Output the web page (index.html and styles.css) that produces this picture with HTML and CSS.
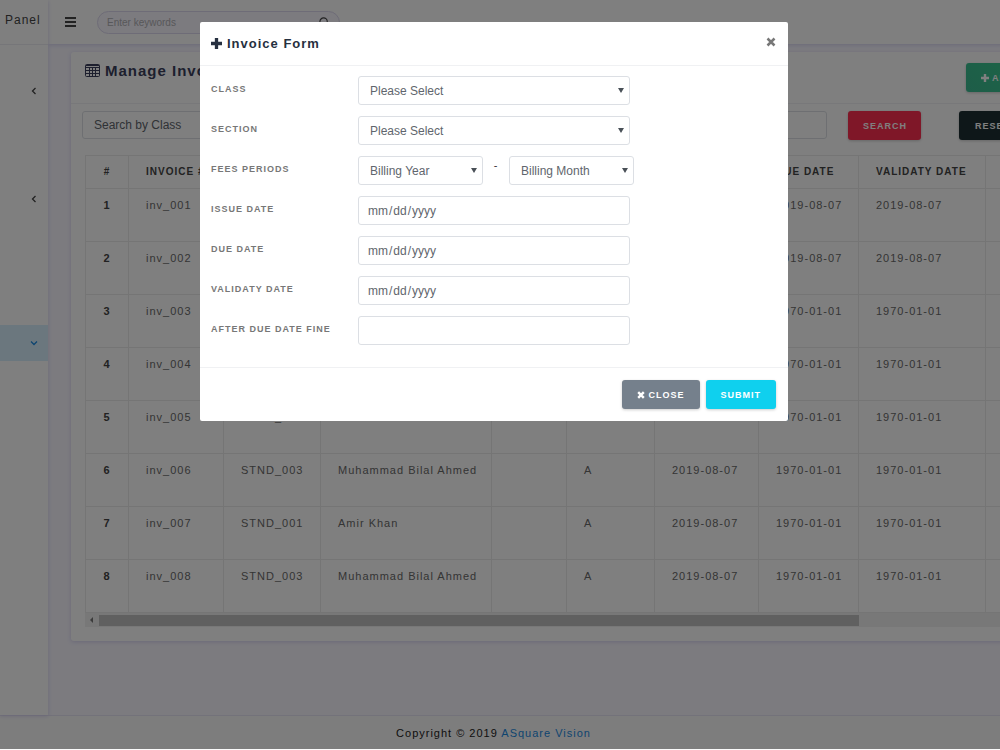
FILE: index.html
```html
<!DOCTYPE html>
<html lang="en">
<head>
    <meta charset="UTF-8">
    <meta name="viewport" content="width=device-width, initial-scale=1.0">
    <title>Manage Invoices</title>
    <link rel="stylesheet" href="styles.css">
</head>
<body>
    <div class="page">
        <!-- Sidebar -->
        <aside class="sidebar">
            <div class="logo">Panel</div>
            <ul class="menu">
                <li><a href="#" aria-label="Menu"><svg class="chevron" viewBox="0 0 8 8"><path d="M5.5 1 2.5 4l3 3"/></svg></a></li>
                <li></li>
                <li></li>
                <li><a href="#" aria-label="Menu"><svg class="chevron" viewBox="0 0 8 8"><path d="M5.5 1 2.5 4l3 3"/></svg></a></li>
                <li></li>
                <li></li>
                <li></li>
                <li class="active"><a href="#" aria-label="Menu"><svg class="chevron" viewBox="0 0 8 8"><path d="M1 2.5l3 3 3-3"/></svg></a></li>
            </ul>
        </aside>

        <div class="main">
            <!-- Top bar -->
            <header class="topbar">
                <button class="toggle" aria-label="Toggle menu"><span></span><span></span><span></span></button>
                <div class="search">
                    <input type="text" placeholder="Enter keywords" aria-label="Search">
                    <svg viewBox="0 0 12 12"><circle cx="5" cy="5" r="4"/><path d="M8 8l3 3"/></svg>
                </div>
            </header>

            <!-- Invoices -->
            <section class="card">
                <div class="card-header">
                    <h1>
                        <svg class="table-icon" viewBox="0 0 15 13"><rect x=".5" y=".5" width="14" height="12" rx="1"/><path d="M1 1.500h13M1 3.500h13M1 6.500h13M1 9.500h13M4.500 3v9M7.500 3v9M10.500 3v9"/></svg>
                        Manage Invoices
                    </h1>
                    <button class="btn btn-green"><svg class="icon" viewBox="0 0 10 10"><path d="M3.500 0h3v3.500H10v3H6.500V10h-3V6.500H0v-3h3.500z"/></svg> Add New</button>
                </div>
                <div class="filters">
                    <select class="field" aria-label="Search by Class"><option>Search by Class</option></select>
                    <input class="field" type="text" aria-label="Search">
                    <button class="btn btn-red">Search</button>
                    <button class="btn btn-dark">Reset</button>
                </div>
                <div class="table-wrap">
                    <table>
                        <colgroup>
                            <col class="w-num"><col class="w-inv"><col class="w-std"><col class="w-name"><col class="w-class">
                            <col class="w-sec"><col class="w-issue"><col class="w-due"><col class="w-valid"><col class="w-rest">
                        </colgroup>
                        <thead>
                            <tr><th>#</th><th>Invoice #</th><th>Roll #</th><th>Name</th><th>Class</th><th>Section</th><th>Issue Date</th><th>Due Date</th><th>Validaty Date</th><th></th></tr>
                        </thead>
                        <tbody>
                            <tr><th>1</th><td>inv_001</td><td>STND_001</td><td>Amir Khan</td><td></td><td>A</td><td>2019-08-07</td><td>2019-08-07</td><td>2019-08-07</td><td></td></tr>
                            <tr><th>2</th><td>inv_002</td><td>STND_003</td><td>Muhammad Bilal Ahmed</td><td></td><td>A</td><td>2019-08-07</td><td>2019-08-07</td><td>2019-08-07</td><td></td></tr>
                            <tr><th>3</th><td>inv_003</td><td>STND_001</td><td>Amir Khan</td><td></td><td>A</td><td>2019-08-07</td><td>1970-01-01</td><td>1970-01-01</td><td></td></tr>
                            <tr><th>4</th><td>inv_004</td><td>STND_003</td><td>Muhammad Bilal Ahmed</td><td></td><td>A</td><td>2019-08-07</td><td>1970-01-01</td><td>1970-01-01</td><td></td></tr>
                            <tr><th>5</th><td>inv_005</td><td>STND_001</td><td>Amir Khan</td><td></td><td>A</td><td>2019-08-07</td><td>1970-01-01</td><td>1970-01-01</td><td></td></tr>
                            <tr><th>6</th><td>inv_006</td><td>STND_003</td><td>Muhammad Bilal Ahmed</td><td></td><td>A</td><td>2019-08-07</td><td>1970-01-01</td><td>1970-01-01</td><td></td></tr>
                            <tr><th>7</th><td>inv_007</td><td>STND_001</td><td>Amir Khan</td><td></td><td>A</td><td>2019-08-07</td><td>1970-01-01</td><td>1970-01-01</td><td></td></tr>
                            <tr><th>8</th><td>inv_008</td><td>STND_003</td><td>Muhammad Bilal Ahmed</td><td></td><td>A</td><td>2019-08-07</td><td>1970-01-01</td><td>1970-01-01</td><td></td></tr>
                        </tbody>
                    </table>
                </div>
                <div class="scrollbar"><span class="scroll-arrow"></span><span class="scroll-thumb"></span></div>
            </section>
        </div>
    </div>

    <footer class="footer">Copyright © 2019 <a href="#">ASquare Vision</a></footer>

    <!-- Invoice modal -->
    <div class="backdrop">
        <form class="modal" role="dialog" aria-labelledby="modal-title">
            <div class="modal-header">
                <h2 id="modal-title"><svg class="icon" viewBox="0 0 10 10"><path d="M3.500 0h3v3.500H10v3H6.500V10h-3V6.500H0v-3h3.500z"/></svg> Invoice Form</h2>
                <button type="button" class="close" aria-label="Close"><svg viewBox="0 0 10 10"><path d="M1.500 1.500l7 7M8.500 1.500l-7 7"/></svg></button>
            </div>
            <div class="modal-body">
                <div class="form-row">
                    <label for="class">Class</label>
                    <div class="select"><select class="field" id="class"><option>Please Select</option></select></div>
                </div>
                <div class="form-row">
                    <label for="section">Section</label>
                    <div class="select"><select class="field" id="section"><option>Please Select</option></select></div>
                </div>
                <div class="form-row">
                    <label for="year">Fees Periods</label>
                    <div class="period">
                        <div class="select"><select class="field" id="year"><option>Billing Year</option></select></div>
                        <span>-</span>
                        <div class="select"><select class="field" aria-label="Billing Month"><option>Billing Month</option></select></div>
                    </div>
                </div>
                <div class="form-row">
                    <label for="issue">Issue Date</label>
                    <input class="field" type="date" id="issue">
                </div>
                <div class="form-row">
                    <label for="due">Due Date</label>
                    <input class="field" type="date" id="due">
                </div>
                <div class="form-row">
                    <label for="validity">Validaty Date</label>
                    <input class="field" type="date" id="validity">
                </div>
                <div class="form-row">
                    <label for="fine">After Due Date Fine</label>
                    <input class="field" type="text" id="fine">
                </div>
            </div>
            <div class="modal-footer">
                <button type="button" class="btn btn-gray"><svg class="icon icon-x" viewBox="0 0 10 10"><path d="M1.500 1.500l7 7M8.500 1.500l-7 7"/></svg> Close</button>
                <button type="submit" class="btn btn-cyan">Submit</button>
            </div>
        </form>
    </div>
</body>
</html>
```

FILE: styles.css
```css
* {
    box-sizing: border-box;
}
body {
    margin: 0;
    min-height: 100vh;
    display: flex;
    flex-direction: column;
    overflow: hidden;
    font-family: "Liberation Sans", Arial, sans-serif;
    font-size: 11px;
    letter-spacing: 1px;
    color: #6a6a6a;
    background: #f8f6ff;
}
button, input, select {
    font-family: inherit;
}
a {
    color: #1b8ae0;
    text-decoration: none;
}
.page {
    display: flex;
    flex: 1;
    min-width: 1068px;
}

/* Sidebar */
.sidebar {
    width: 48px;
    background: #fff;
    box-shadow: 0 1px 4px #d5d2f0;
    position: relative;
}
.logo {
    height: 45px;
    line-height: 40px;
    padding-left: 5px;
    border-bottom: 1px solid #ececf2;
    font-size: 12px;
    color: #444;
}
.menu {
    list-style: none;
    margin: 28px 0 0;
    padding: 0;
}
.menu li {
    height: 36px;
}
.menu a {
    display: flex;
    height: 100%;
    align-items: center;
    justify-content: flex-end;
    padding-right: 10px;
    color: #444;
}
.menu .active {
    background: #d7effd;
}
.menu .active a {
    color: #1b8ae0;
}
.chevron {
    width: 8px;
    height: 8px;
    fill: none;
    stroke: currentColor;
    stroke-width: 1.3;
}

/* Top bar */
.main {
    flex: 1;
    min-width: 0;
}
.topbar {
    height: 44px;
    display: flex;
    align-items: center;
    padding-left: 17px;
    background: #fff;
    box-shadow: 0 1px 4px #d5d2f0;
}
.toggle {
    width: 11px;
    padding: 0;
    border: none;
    background: none;
}
.toggle span {
    display: block;
    height: 2px;
    margin: 1px 0 2px;
    background: #444;
}
.search {
    width: 243px;
    height: 23px;
    margin-left: 21px;
    padding: 0 9px;
    display: flex;
    align-items: center;
    border: 1px solid #dcd8ee;
    border-radius: 12px;
    background: #f8f6ff;
}
.search input {
    flex: 1;
    min-width: 0;
    padding: 0;
    border: none;
    outline: none;
    background: none;
    font-size: 10px;
}
.search input::placeholder {
    color: #b0b0b4;
}
.search svg {
    width: 11px;
    height: 11px;
    fill: none;
    stroke: #444;
    stroke-width: 1.2;
}

/* Card */
.card {
    margin: 8px 0 74px 23px;
    padding-bottom: 14px;
    border-radius: 3px;
    background: #fff;
    box-shadow: 0 1px 4px #d5d2f0;
    overflow: hidden;
}
.card-header {
    height: 52px;
    padding: 0 11px 0 14px;
    display: flex;
    align-items: center;
    justify-content: space-between;
    border-bottom: 1px solid #f0f0f4;
}
.card-header h1 {
    margin: 0 0 14px;
    display: flex;
    align-items: center;
    gap: 5px;
    font-size: 15px;
    color: #3b3f5c;
}
.table-icon {
    width: 15px;
    height: 13px;
    fill: none;
    stroke: currentColor;
}
.filters {
    display: flex;
    padding: 7px 42px 15px 11px;
}
.filters .field {
    flex: 1;
    height: 28px;
    margin-right: 10px;
}
.filters .btn-red {
    width: 73px;
    margin: 0 38px 0 11px;
}
.filters .btn-dark {
    width: 67px;
}
.table-wrap {
    margin: 0 0 0 14px;
    overflow: hidden;
}
table {
    width: 1110px;
    table-layout: fixed;
    border-collapse: collapse;
}
th, td {
    height: 53px;
    padding: 10px 17px;
    border: 1px solid #ebebeb;
    text-align: left;
    vertical-align: top;
    white-space: nowrap;
}
th {
    color: #444;
}
th:first-child {
    padding: 10px 0;
    text-align: center;
}
thead th {
    height: 33px;
    font-size: 10px;
    text-transform: uppercase;
}
.w-num { width: 43px; }
.w-inv { width: 95px; }
.w-std { width: 97px; }
.w-name { width: 171px; }
.w-class { width: 75px; }
.w-sec { width: 88px; }
.w-issue { width: 104px; }
.w-due { width: 100px; }
.w-valid { width: 127px; }
.w-rest { width: 210px; }
.scrollbar {
    height: 14px;
    margin-left: 14px;
    display: flex;
    align-items: center;
    background: #f1f1f1;
}
.scroll-arrow {
    margin: 0 6px 0 5px;
    border: 3px solid transparent;
    border-left: none;
    border-right-color: #777;
}
.scroll-thumb {
    width: 760px;
    height: 11px;
    background: #c1c1c1;
}

/* Fields and buttons */
.field {
    width: 100%;
    height: 29px;
    padding: 0 11px;
    border: 1px solid #dcdfe4;
    border-radius: 3px;
    outline: none;
    background: #fff;
    color: #5f666d;
    font-size: 12px;
    appearance: none;
}
input[type="date"] {
    padding: 0 8px;
}
input[type="date"]::-webkit-calendar-picker-indicator {
    display: none;
}
.select {
    position: relative;
}
.select::after {
    content: "";
    position: absolute;
    right: 6px;
    top: 12px;
    border: 3px solid transparent;
    border-top: 5px solid #495057;
    border-bottom: none;
    pointer-events: none;
}
.btn {
    height: 29px;
    padding: 0 15px;
    border: none;
    border-radius: 3px;
    color: #fff;
    font-size: 9px;
    font-weight: bold;
    letter-spacing: 1px;
    text-transform: uppercase;
    white-space: nowrap;
    box-shadow: 0 1px 3px rgba(0, 0, 0, 0.2);
}
.btn-green { background: linear-gradient(45deg, #3cba92, #38d08c); }
.btn-red { background: #ff2e50; }
.btn-dark { background: #1d2f33; }
.btn-gray { background: #75808c; }
.btn-cyan { background: #0fd0ee; }
.icon {
    width: 8px;
    height: 8px;
    fill: currentColor;
}
.btn .icon {
    vertical-align: -1px;
}
.icon-x {
    stroke: currentColor;
    stroke-width: 3;
}

/* Footer */
.footer {
    height: 35px;
    padding-right: 13px;
    line-height: 34px;
    border-top: 1px solid #e6e4f4;
    background: #fbfbfb;
    text-align: center;
    color: #222;
}

/* Modal */
.backdrop {
    position: fixed;
    inset: 0 0 1px;
    display: flex;
    justify-content: center;
    align-items: flex-start;
    padding: 22px 12px 0 0;
    background: rgba(0, 0, 0, 0.5);
}
.modal {
    width: 588px;
    max-width: 100%;
    border-radius: 2px;
    background: #fff;
}
.modal-header {
    height: 44px;
    padding: 0 12px 0 11px;
    display: flex;
    align-items: center;
    justify-content: space-between;
    border-bottom: 1px solid #f0f1f3;
}
.modal-header h2 {
    margin: 0;
    display: flex;
    align-items: center;
    gap: 5px;
    font-size: 13px;
    color: #263040;
}
.modal-header .icon {
    width: 11px;
    height: 11px;
}
.close {
    padding: 0 0 4px;
    border: none;
    background: none;
    color: #777;
}
.close svg {
    display: block;
    width: 10px;
    height: 10px;
    stroke: currentColor;
    stroke-width: 2.5;
}
.modal-body {
    display: grid;
    gap: 11px;
    padding: 10px 11px 22px;
}
.form-row {
    display: grid;
    grid-template-columns: 147px 272px;
}
.form-row label {
    padding-top: 7px;
    font-size: 9px;
    font-weight: bold;
    line-height: 12px;
    text-transform: uppercase;
    color: #777;
}
.period {
    display: flex;
    justify-content: space-between;
    width: 276px;
}
.period .select {
    width: 125px;
}
.period span {
    padding-top: 3px;
    color: #333;
}
.modal-footer {
    display: flex;
    justify-content: flex-end;
    gap: 6px;
    padding: 12px;
    border-top: 1px solid #f0f1f3;
}
```
